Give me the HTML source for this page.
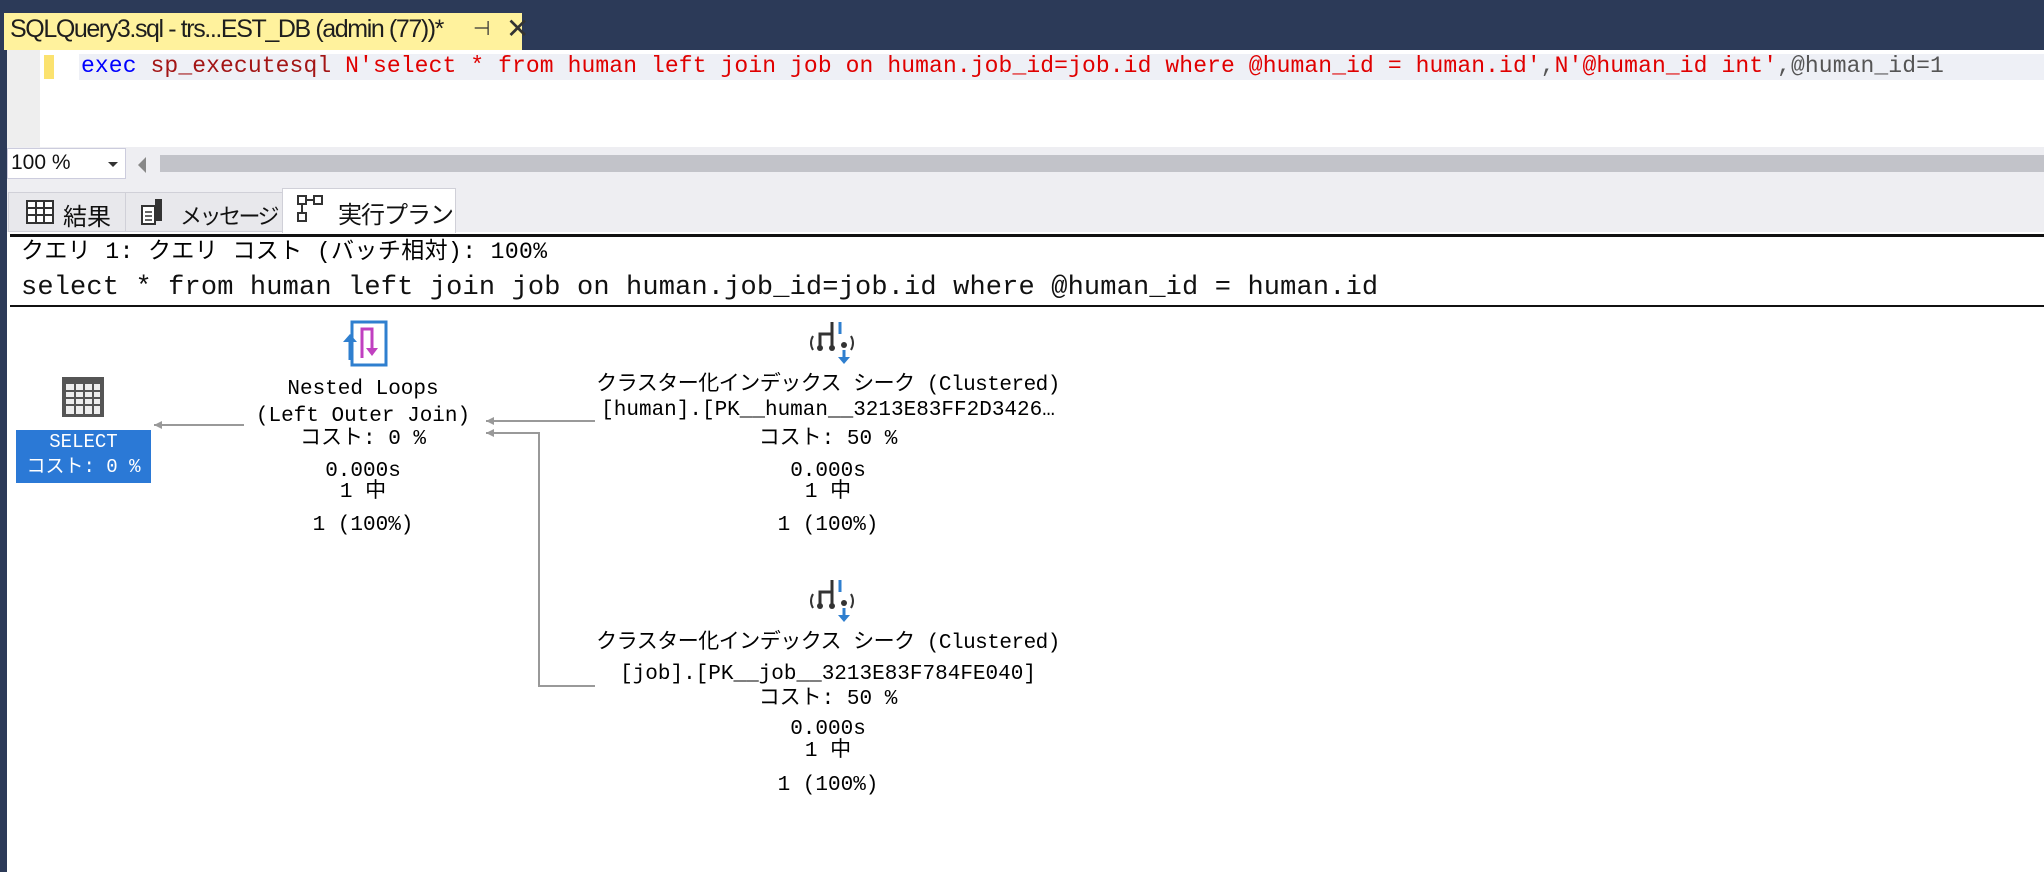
<!DOCTYPE html>
<html><head><meta charset="utf-8"><style>
body{margin:0;width:2044px;height:872px;overflow:hidden;background:#fff;position:relative;font-family:"Liberation Sans","Noto Sans CJK JP",sans-serif}
.a{position:absolute}
.m{font-family:"Liberation Mono","Noto Sans CJK JP",monospace;white-space:pre}
.d{font-size:21px;color:#000;text-align:center;width:600px;line-height:24px}
</style></head><body>
<div class="a" style="left:0;top:0;width:2044px;height:13px;background:#2c3a58"></div>
<div class="a" style="left:0;top:0;width:7px;height:872px;background:#2c3a58"></div>
<div class="a" style="left:522px;top:0;width:1522px;height:50px;background:#2c3a58"></div>
<div class="a" style="left:4px;top:13px;width:518px;height:37px;background:#fff29d"></div>
<div class="a" style="left:10px;top:15px;font-size:25px;color:#1e1e1e;letter-spacing:-1.4px;white-space:nowrap">SQLQuery3.sql - trs...EST_DB (admin (77))*</div>
<div class="a" style="left:473px;top:16px;font-size:20px;color:#333">⊣</div>
<div class="a" style="left:506px;top:12px;font-size:28px;color:#333">✕</div>
<!-- editor -->
<div class="a" style="left:7px;top:50px;width:2037px;height:97px;background:#fff"></div>
<div class="a" style="left:7px;top:50px;width:33px;height:97px;background:#eeeeee"></div>
<div class="a" style="left:44px;top:55px;width:10px;height:24px;background:#fbe26f"></div>
<div class="a" style="left:79px;top:54px;width:1965px;height:26px;background:#eef0f6"></div>
<div class="a m" style="left:81px;top:53px;font-size:23px;line-height:26px;color:#e00000;letter-spacing:0.1px"><span style="color:#0000ff">exec</span> <span style="color:#a31515">sp_executesql</span> N'select * from human left join job on human.job_id=job.id where @human_id = human.id'<span style="color:#555">,</span>N'@human_id int'<span style="color:#555">,@human_id=1</span></div>
<!-- zoom bar -->
<div class="a" style="left:7px;top:147px;width:2037px;height:38px;background:#eeeef2"></div>
<div class="a" style="left:7px;top:148px;width:117px;height:29px;background:#fff;border:1px solid #ccd"></div>
<div class="a" style="left:11px;top:151px;font-size:21px;color:#111">100 %</div>
<div class="a" style="left:108px;top:162px;border-left:5px solid transparent;border-right:5px solid transparent;border-top:5px solid #333"></div>
<div class="a" style="left:138px;top:157px;border-top:8px solid transparent;border-bottom:8px solid transparent;border-right:8px solid #888"></div>
<div class="a" style="left:160px;top:155px;width:1884px;height:17px;background:#c2c3c9"></div>
<!-- tabs -->
<div class="a" style="left:7px;top:185px;width:2037px;height:47px;background:#eeeef2"></div>
<div class="a" style="left:8px;top:192px;width:116px;height:38px;background:#e8e8ec;border:1px solid #d0d0d8"></div>
<div class="a" style="left:125px;top:192px;width:157px;height:38px;background:#e8e8ec;border:1px solid #d0d0d8"></div>
<div class="a" style="left:282px;top:188px;width:172px;height:44px;background:#fff;border:1px solid #d0d0d8;border-bottom:none"></div>
<svg class="a" style="left:26px;top:200px" width="28" height="24"><rect x="1" y="1" width="26" height="22" fill="#fff" stroke="#333" stroke-width="2"/><path d="M1 8H27M1 15H27M10 1V23M18 1V23" stroke="#333" stroke-width="2"/></svg>
<div class="a" style="left:63px;top:197px;font-size:24px;color:#111">結果</div>
<svg class="a" style="left:140px;top:197px" width="24" height="30"><rect x="2" y="9" width="13" height="18" fill="#fff" stroke="#333" stroke-width="2"/><path d="M5 15H12M5 19H12M5 23H12" stroke="#333" stroke-width="1.5"/><rect x="15" y="2" width="7" height="22" fill="#333"/></svg>
<div class="a" style="left:180px;top:199px;font-size:22px;color:#111;letter-spacing:-2.5px">メッセージ</div>
<svg class="a" style="left:296px;top:194px" width="30" height="30"><rect x="2" y="2" width="8" height="8" fill="none" stroke="#333" stroke-width="2"/><rect x="18" y="2" width="8" height="8" fill="none" stroke="#333" stroke-width="2"/><rect x="2" y="19" width="8" height="8" fill="none" stroke="#333" stroke-width="2"/><path d="M10 6H18M6 10V19" stroke="#333" stroke-width="2"/></svg>
<div class="a" style="left:338px;top:195px;font-size:24px;color:#111;letter-spacing:-1px">実行プラン</div>
<!-- results -->
<div class="a" style="left:10px;top:234px;width:2034px;height:3px;background:#111"></div>
<div class="a m" style="left:21px;top:239px;font-size:23px;line-height:26px;color:#000;letter-spacing:0.4px">クエリ 1: クエリ コスト (バッチ相対): 100%</div>
<div class="a m" style="left:21px;top:273px;font-size:27px;line-height:30px;color:#111;letter-spacing:0.15px">select * from human left join job on human.job_id=job.id where @human_id = human.id</div>
<div class="a" style="left:10px;top:305px;width:2034px;height:2px;background:#111"></div>
<!-- lines -->
<svg class="a" style="left:0;top:0" width="2044" height="872"><g stroke="#999" stroke-width="2" fill="none"><path d="M154 425H244"/><path d="M486 421H595"/><path d="M486 433H539V686H595"/></g><g fill="#999"><path d="M154 425l8-4v8z"/><path d="M486 421l8-4v8z"/><path d="M486 433l8-4v8z"/></g></svg>
<!-- select icon -->
<svg class="a" style="left:61px;top:376px" width="44" height="42"><rect x="1" y="1" width="42" height="40" fill="#555"/><g fill="#eee"><rect x="5" y="8" width="34" height="30"/></g><g fill="#555"><path d="M5 14H39V16H5zM5 21H39V23H5zM5 28H39V30H5zM13 8H15V38H13zM22 8H24V38H22zM31 8H33V38H31z"/></g></svg>
<div class="a" style="left:16px;top:430px;width:135px;height:53px;background:#2b79d6"></div>
<div class="a m" style="left:16px;top:430px;width:135px;text-align:center;color:#fff;font-size:19px;line-height:25px">SELECT<br>コスト: 0 %</div>
<!-- nested loops icon -->
<svg class="a" style="left:342px;top:320px" width="46" height="47"><rect x="10" y="2" width="34" height="43" fill="#fff" stroke="#2f7fcf" stroke-width="3"/><path d="M20 38V9H30V30" stroke="#c040c0" stroke-width="3" fill="none"/><path d="M24 28h12l-6 8z" fill="#c040c0"/><path d="M8 40V20" stroke="#2f7fcf" stroke-width="3"/><path d="M1 22l7-8 7 8z" fill="#2f7fcf"/></svg>
<div class="a m d" style="left:63px;top:378px">Nested Loops</div>
<div class="a m d" style="left:63px;top:405px">(Left Outer Join)</div>
<div class="a m d" style="left:63px;top:428px">コスト: 0 %</div>
<div class="a m d" style="left:63px;top:460px">0.000s</div>
<div class="a m d" style="left:63px;top:481px">1 中</div>
<div class="a m d" style="left:63px;top:514px">1 (100%)</div>
<!-- seek icons -->
<svg class="a" style="left:808px;top:320px" width="48" height="46"><path d="M5 16Q1 23 5 30M43 16Q47 23 43 30" stroke="#333" stroke-width="2" fill="none"/><path d="M12 28V14H24V28M24 2V14" stroke="#333" stroke-width="3" fill="none"/><circle cx="12" cy="28" r="3" fill="#333"/><circle cx="24" cy="28" r="3" fill="#333"/><circle cx="36" cy="25" r="3" fill="#333"/><path d="M32 2V14M36 30V38" stroke="#2f7fcf" stroke-width="3"/><path d="M30 37h12l-6 7z" fill="#2f7fcf"/></svg>
<svg class="a" style="left:808px;top:578px" width="48" height="46"><path d="M5 16Q1 23 5 30M43 16Q47 23 43 30" stroke="#333" stroke-width="2" fill="none"/><path d="M12 28V14H24V28M24 2V14" stroke="#333" stroke-width="3" fill="none"/><circle cx="12" cy="28" r="3" fill="#333"/><circle cx="24" cy="28" r="3" fill="#333"/><circle cx="36" cy="25" r="3" fill="#333"/><path d="M32 2V14M36 30V38" stroke="#2f7fcf" stroke-width="3"/><path d="M30 37h12l-6 7z" fill="#2f7fcf"/></svg>
<div class="a m d" style="left:528px;top:374px;letter-spacing:-0.5px">クラスター化インデックス シーク (Clustered)</div>
<div class="a m d" style="left:528px;top:399px">[human].[PK__human__3213E83FF2D3426…</div>
<div class="a m d" style="left:528px;top:428px">コスト: 50 %</div>
<div class="a m d" style="left:528px;top:460px">0.000s</div>
<div class="a m d" style="left:528px;top:481px">1 中</div>
<div class="a m d" style="left:528px;top:514px">1 (100%)</div>
<div class="a m d" style="left:528px;top:632px;letter-spacing:-0.5px">クラスター化インデックス シーク (Clustered)</div>
<div class="a m d" style="left:528px;top:663px">[job].[PK__job__3213E83F784FE040]</div>
<div class="a m d" style="left:528px;top:688px">コスト: 50 %</div>
<div class="a m d" style="left:528px;top:718px">0.000s</div>
<div class="a m d" style="left:528px;top:740px">1 中</div>
<div class="a m d" style="left:528px;top:774px">1 (100%)</div>
</body></html>
